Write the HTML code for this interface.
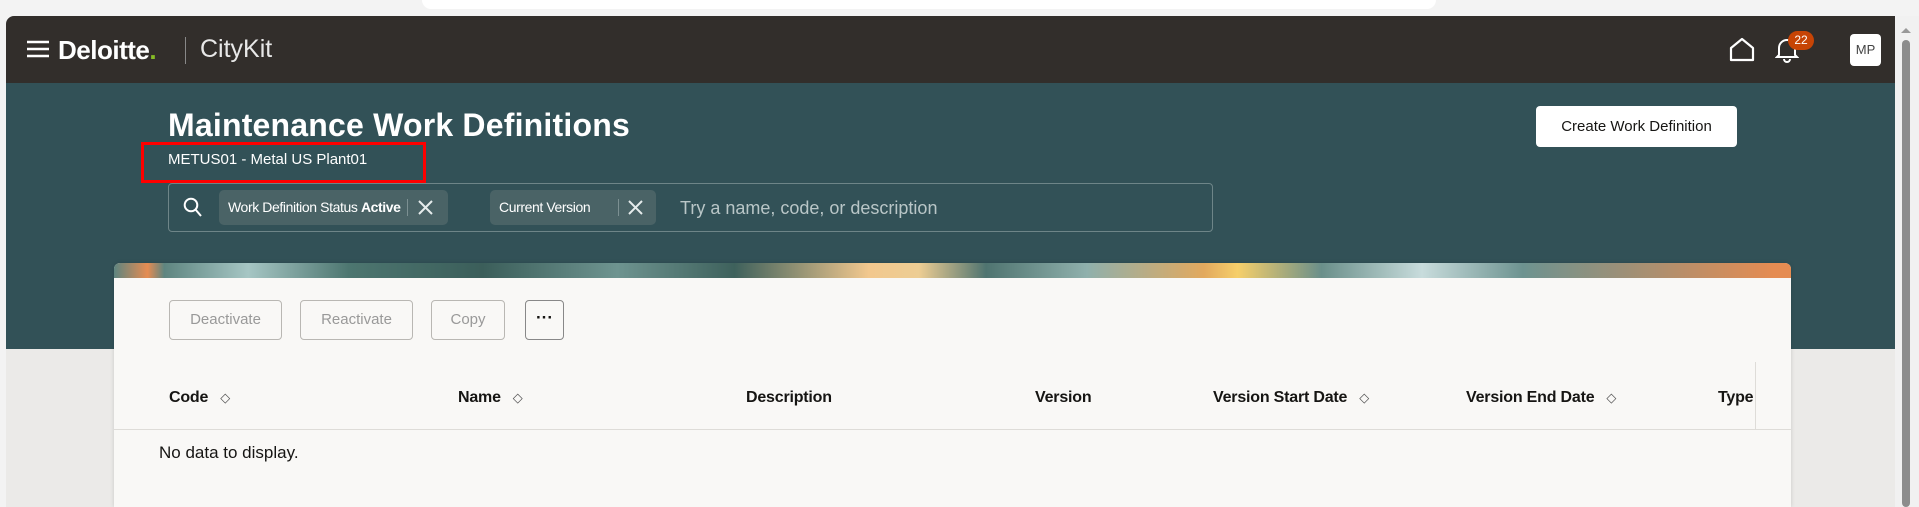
<!DOCTYPE html>
<html><head><meta charset="utf-8"><style>
*{box-sizing:border-box;margin:0;padding:0}
body{width:1919px;height:507px;overflow:hidden;background:#f3f3f3;font-family:"Liberation Sans",sans-serif;position:relative}
.abs{position:absolute}
.app{left:6px;top:16px;width:1889px;height:491px;background:#ebeae8;border-radius:8px 0 0 0;overflow:hidden}
.hdr{left:0;top:0;width:1889px;height:67px;background:#322e2b}
.teal{left:0;top:67px;width:1889px;height:266px;background:#325157}
.chip{height:35px;background:#4a6366;border-radius:5px;color:#fff;font-size:14px;letter-spacing:-0.4px;line-height:35px;padding-left:9px;white-space:nowrap}
.btn{height:40px;border:1px solid #b9b7b3;border-radius:4px;color:#999;font-size:15px;line-height:38px;text-align:center;background:#f9f8f6}
.th{top:389px;font-size:16px;font-weight:bold;color:#161513;letter-spacing:-0.2px}
.sort{font-weight:normal;color:#555;font-size:13px;margin-left:12px}
</style></head><body>
<div class="abs" style="left:422px;top:0;width:1014px;height:9px;background:#fff;border-radius:0 0 10px 10px"></div>
<div class="abs app">
 <div class="abs hdr"></div>
 <div class="abs teal"></div>
</div>
<svg class="abs" style="left:27px;top:40px" width="22" height="18"><g stroke="#fff" stroke-width="2.4"><line x1="0" y1="2" x2="22" y2="2"/><line x1="0" y1="9" x2="22" y2="9"/><line x1="0" y1="16" x2="22" y2="16"/></g></svg>
<div class="abs" style="left:58px;top:35px;color:#fff;font-size:26px;font-weight:bold;letter-spacing:-0.5px">Deloitte<span style="color:#86bc25">.</span></div>
<div class="abs" style="left:185px;top:37px;width:1px;height:27px;background:#888"></div>
<div class="abs" style="left:200px;top:35px;color:#e8e8e8;font-size:25px">CityKit</div>
<svg class="abs" style="left:1729px;top:37px" width="26" height="25"><path d="M2 11 L13 2 L24 11 V23 H2 Z" fill="none" stroke="#fff" stroke-width="2.2" stroke-linejoin="round"/></svg>
<svg class="abs" style="left:1775px;top:37px" width="24" height="26"><path d="M4 18 V11 A8 8 0 0 1 20 11 V18 L22 20 H2 Z" fill="none" stroke="#fff" stroke-width="2"/><path d="M9 22 A3 3 0 0 0 15 22" fill="none" stroke="#fff" stroke-width="2"/></svg>
<div class="abs" style="left:1788px;top:31px;width:26px;height:19px;background:#c74405;border-radius:10px;color:#fff;font-size:12px;text-align:center;line-height:19px">22</div>
<div class="abs" style="left:1850px;top:34px;width:31px;height:32px;background:#fff;border-radius:4px;color:#444;font-size:13px;text-align:center;line-height:32px">MP</div>
<div class="abs" style="left:168px;top:107px;color:#fff;font-size:32px;font-weight:bold;letter-spacing:0.2px">Maintenance Work Definitions</div>
<div class="abs" style="left:168px;top:151px;color:#fff;font-size:15px">METUS01 - Metal US Plant01</div>
<div class="abs" style="left:141px;top:142px;width:285px;height:41px;border:3px solid #f00"></div>
<div class="abs" style="left:1536px;top:106px;width:201px;height:41px;background:#fff;border-radius:4px;font-size:15px;color:#161513;text-align:center;line-height:41px">Create Work Definition</div>
<div class="abs" style="left:168px;top:183px;width:1045px;height:49px;border:1px solid #6e8588;border-radius:4px"></div>
<svg class="abs" style="left:183px;top:197px" width="20" height="21"><circle cx="8" cy="8" r="6.3" fill="none" stroke="#fff" stroke-width="2"/><line x1="12.5" y1="12.5" x2="18" y2="19" stroke="#fff" stroke-width="2"/></svg>
<div class="abs chip" style="left:219px;top:190px;width:229px">Work Definition Status <b>Active</b><span style="position:absolute;left:188px;top:9px;width:1px;height:17px;background:#7c9092"></span><svg style="position:absolute;left:199px;top:10px" width="15" height="15"><path d="M1 1L14 14M14 1L1 14" stroke="#e6ecec" stroke-width="2"/></svg></div>
<div class="abs chip" style="left:490px;top:190px;width:166px">Current Version<span style="position:absolute;left:128px;top:9px;width:1px;height:17px;background:#7c9092"></span><svg style="position:absolute;left:138px;top:10px" width="15" height="15"><path d="M1 1L14 14M14 1L1 14" stroke="#e6ecec" stroke-width="2"/></svg></div>
<div class="abs" style="left:680px;top:198px;color:#b9c6c7;font-size:18px">Try a name, code, or description</div>
<div class="abs" style="left:114px;top:263px;width:1677px;height:244px;background:#f9f8f6;border-radius:6px 6px 0 0;overflow:hidden;box-shadow:0 0 4px rgba(0,0,0,.15)">
 <div style="height:15px;background:linear-gradient(90deg,#5e8580 0%,#e58c52 2%,#5e8580 3%,#a6c6c4 8%,#4d7670 14%,#3b5e5a 22%,#6e9490 30%,#3e615c 37%,#f2c88e 45%,#edcd93 48%,#4f7470 52%,#8fb0ac 58%,#e2a95e 65%,#f6cf6a 67%,#6a8f8a 72%,#c8dcdc 78%,#6d9390 84%,#e58c52 99%,#e58c52 100%)"></div>
</div>
<div class="abs btn" style="left:169px;top:300px;width:113px">Deactivate</div>
<div class="abs btn" style="left:300px;top:300px;width:113px">Reactivate</div>
<div class="abs btn" style="left:431px;top:300px;width:74px">Copy</div>
<div class="abs btn" style="left:525px;top:300px;width:39px;border-color:#888;color:#161513;font-weight:bold;font-size:17px;line-height:34px">···</div>
<div class="abs th" style="left:169px">Code<span class="sort">◇</span></div>
<div class="abs th" style="left:458px">Name<span class="sort">◇</span></div>
<div class="abs th" style="left:746px">Description</div>
<div class="abs th" style="left:1035px">Version</div>
<div class="abs th" style="left:1213px">Version Start Date<span class="sort">◇</span></div>
<div class="abs th" style="left:1466px">Version End Date<span class="sort">◇</span></div>
<div class="abs th" style="left:1718px;width:37px;overflow:hidden">Type</div>
<div class="abs" style="left:1755px;top:362px;width:1px;height:67px;background:#dedcd8"></div>
<div class="abs" style="left:114px;top:429px;width:1677px;height:1px;background:#dedcd8"></div>
<div class="abs" style="left:159px;top:443px;font-size:17px;color:#161513">No data to display.</div>
<div class="abs" style="left:1895px;top:16px;width:24px;height:491px;background:#f1f1f1"></div>
<div class="abs" style="left:1902px;top:40px;width:8px;height:467px;background:#8c8c8c;border-radius:4px"></div>
<div class="abs" style="left:1901px;top:28px;width:0;height:0;border-left:5px solid transparent;border-right:5px solid transparent;border-bottom:5px solid #999"></div>
</body></html>
